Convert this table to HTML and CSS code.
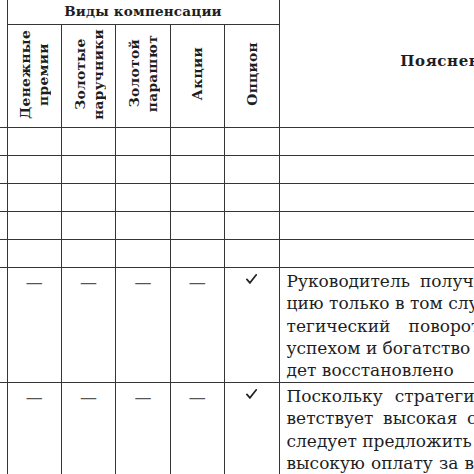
FILE: index.html
```html
<!DOCTYPE html>
<html lang="ru">
<head>
<meta charset="utf-8">
<link rel="stylesheet" href="styles.css">
</head>
<body>
<div class="page">
<table class="grid">
  <colgroup>
    <col class="c-lead">
    <col class="c-kind"><col class="c-kind"><col class="c-kind"><col class="c-kind"><col class="c-kind">
    <col class="c-note">
  </colgroup>
  <thead>
    <tr class="h1">
      <th class="lead" rowspan="2"></th>
      <th class="kinds" colspan="5">Виды компенсации</th>
      <th class="note-h" rowspan="2">Пояснения</th>
    </tr>
    <tr class="h2">
      <th class="vert"><span>Денежные<br>премии</span></th>
      <th class="vert"><span>Золотые<br>наручники</span></th>
      <th class="vert"><span>Золотой<br>парашют</span></th>
      <th class="vert"><span>Акции</span></th>
      <th class="vert"><span>Опцион</span></th>
    </tr>
  </thead>
  <tbody>
    <tr class="empty"><td></td><td></td><td></td><td></td><td></td><td></td><td></td></tr>
    <tr class="empty"><td></td><td></td><td></td><td></td><td></td><td></td><td></td></tr>
    <tr class="empty"><td></td><td></td><td></td><td></td><td></td><td></td><td></td></tr>
    <tr class="empty"><td></td><td></td><td></td><td></td><td></td><td></td><td></td></tr>
    <tr class="empty"><td></td><td></td><td></td><td></td><td></td><td></td><td></td></tr>
    <tr class="data d1">
      <td></td>
      <td class="mark dash">—</td>
      <td class="mark dash">—</td>
      <td class="mark dash">—</td>
      <td class="mark dash">—</td>
      <td class="mark check"><svg class="tick" width="11" height="10" viewBox="0 0 11 10" aria-label="✓"><path d="M0.9 5.4 L3.9 8.9 L10.3 0.8" /></svg></td>
      <td class="note">
        <div class="ln">Руководитель получает компенса-</div>
        <div class="ln">цию только в том случае, если стра-</div>
        <div class="ln">тегический поворот завершится</div>
        <div class="ln">успехом и богатство акционеров бу-</div>
        <div class="ln last">дет восстановлено</div>
      </td>
    </tr>
    <tr class="data d2">
      <td></td>
      <td class="mark dash">—</td>
      <td class="mark dash">—</td>
      <td class="mark dash">—</td>
      <td class="mark dash">—</td>
      <td class="mark check"><svg class="tick" width="11" height="10" viewBox="0 0 11 10" aria-label="✓"><path d="M0.9 5.4 L3.9 8.9 L10.3 0.8" /></svg></td>
      <td class="note">
        <div class="ln">Поскольку стратегии роста соот-</div>
        <div class="ln">ветствует высокая степень риска,</div>
        <div class="ln">следует предложить руководителю</div>
        <div class="ln">высокую оплату за выполнение за-</div>
      </td>
    </tr>
  </tbody>
</table>
</div>
</body>
</html>
```

FILE: styles.css
```css
html, body {
  margin: 0;
  padding: 0;
  background: #ffffff;
}
body {
  width: 474px;
  height: 474px;
  overflow: hidden;
  font-family: "DejaVu Serif", "Liberation Serif", serif;
  color: #1e1e1e;
}
.page {
  width: 474px;
  height: 474px;
  overflow: hidden;
}
.grid {
  border-collapse: collapse;
  table-layout: fixed;
  width: 625px;
  margin-top: -6px;
}
.c-lead { width: 7px; }
.c-kind { width: 54.4px; }
.c-note { width: 346px; }

.grid th, .grid td {
  border: 1px solid #353535;
  padding: 0;
}
.grid tr > :first-child { border-left: none; }

.h1 { height: 30px; }
.h2 { height: 103px; }
.empty { height: 28px; }
.d1 { height: 115px; }
.d2 { height: 110px; }

.grid .kinds {
  font-weight: bold;
  font-size: 13.5px;
  letter-spacing: 0.2px;
  text-align: center;
  vertical-align: bottom;
  padding-bottom: 5px;
}
.grid .note-h {
  font-weight: bold;
  font-size: 15px;
  letter-spacing: 0.6px;
  text-align: center;
  vertical-align: middle;
}
.grid .vert {
  text-align: center;
  vertical-align: middle;
}
.vert span {
  display: inline-block;
  writing-mode: vertical-rl;
  transform: rotate(180deg);
  font-size: 13.8px;
  font-weight: bold;
  line-height: 18px;
  letter-spacing: 0.3px;
  text-align: center;
}

.grid .mark {
  text-align: center;
  vertical-align: top;
}
.grid .dash {
  font-size: 17px;
  line-height: 17px;
  color: #555;
  padding-top: 6px;
}
.grid .check {
  padding-top: 6px;
  line-height: 0;
}
.tick {
  display: inline-block;
}
.tick path {
  fill: none;
  stroke: #222;
  stroke-width: 1.7;
  stroke-linecap: round;
  stroke-linejoin: miter;
}
.grid .note {
  vertical-align: top;
  padding: 2px 19px 0 7px;
  font-size: 17px;
  line-height: 22.25px;
}
.ln {
  white-space: nowrap;
  text-align: justify;
  text-align-last: justify;
}
.ln.last {
  text-align-last: left;
}
```
